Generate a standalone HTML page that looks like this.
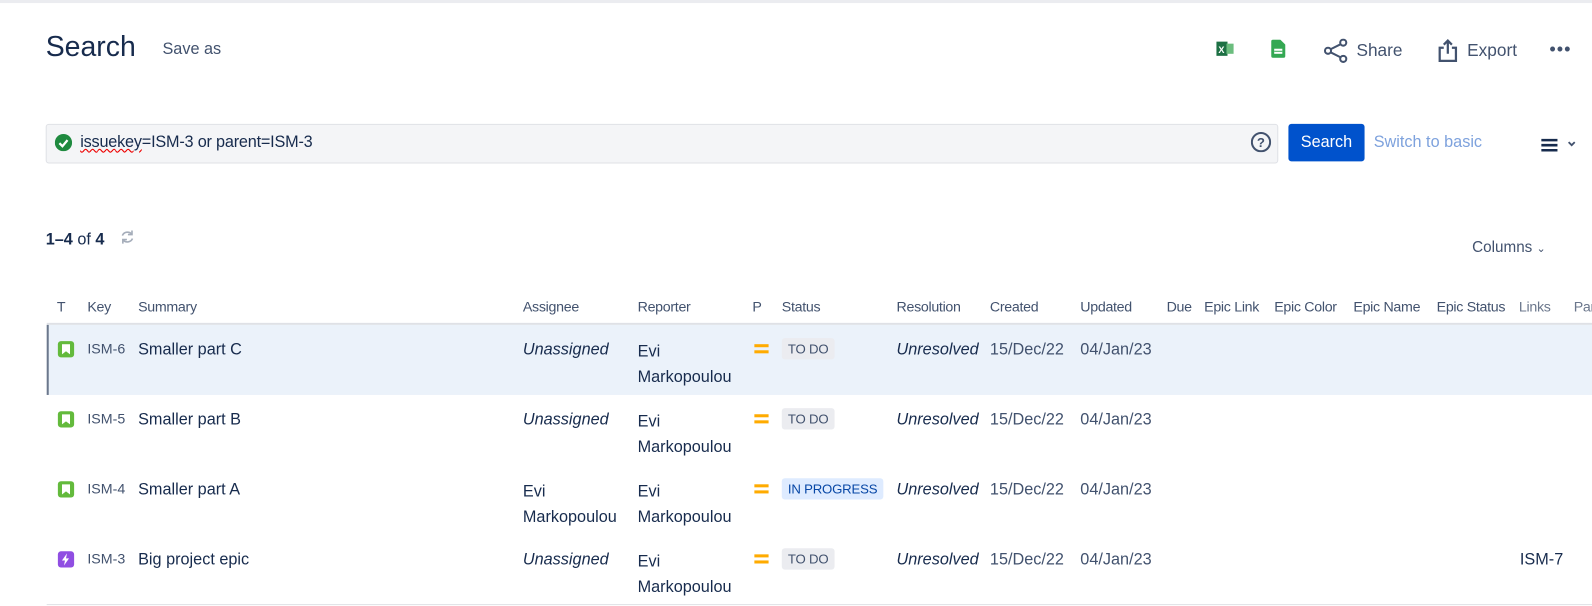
<!DOCTYPE html>
<html><head><meta charset="utf-8"><style>
*{margin:0;padding:0;box-sizing:border-box}
body{width:1592px;height:606px;overflow:hidden;background:#fff;font-family:"Liberation Sans",sans-serif;color:#172b4d;position:relative}
#w{position:absolute;left:0;top:0;width:1568px;height:597px;transform:scale(1.0153);transform-origin:0 0}
.a{position:absolute;white-space:nowrap}
.h{font-size:14px;color:#42526e;top:294px;letter-spacing:-0.3px}
.c{font-size:15px;color:#172b4d}
.s{margin-top:2px}
.g{color:#42526e}
.k{font-size:14px;color:#42526e}
.i{font-style:italic}
.pill{position:absolute;font-size:13px;background:#ebecf0;color:#42526e;padding:3px 6px;border-radius:3px;letter-spacing:-0.2px}
.ip{background:#deebff;color:#0747a6}
.eq{position:absolute;width:14px;height:9px;border-top:3px solid #ffab00;border-bottom:3px solid #ffab00}
.ico{position:absolute;width:16px;height:16px;border-radius:3px;background:#63ba3c}
</style></head><body><div id="w">
<div class="a" style="left:0;top:0;width:1568px;height:3px;background:#ebecf0"></div>
<div class="a" style="left:45px;top:30px;font-size:28px;color:#172b4d">Search</div>
<div class="a" style="left:160px;top:40px;font-size:16px;color:#42526e">Save as</div>
<svg class="a" style="left:1198px;top:40px" width="18" height="16"><rect x="0" y="1" width="11" height="14" fill="#1d7044"/><rect x="10" y="3" width="7" height="10" fill="#6bbd7e"/><text x="2" y="12" font-size="9" fill="#fff" font-family="Liberation Sans" font-weight="bold">X</text></svg>
<svg class="a" style="left:1252px;top:39px" width="14" height="18"><path d="M0 2q0-2 2-2h7l5 5v11q0 2-2 2H2q-2 0-2-2z" fill="#34a853"/><rect x="3" y="9" width="8" height="5" fill="#fff"/><rect x="3" y="11" width="8" height="1" fill="#34a853"/></svg>
<svg class="a" style="left:1304px;top:38px" width="24" height="24" fill="none" stroke="#42526e" stroke-width="2"><circle cx="19" cy="4" r="3"/><circle cx="4" cy="12" r="3"/><circle cx="19" cy="20" r="3"/><path d="M6.5 10.5l10-5M6.5 13.5l10 5"/></svg>
<div class="a" style="left:1336px;top:40px;font-size:17px;color:#42526e">Share</div>
<svg class="a" style="left:1416px;top:38px" width="20" height="24" fill="none" stroke="#42526e" stroke-width="2.2"><path d="M6 9H2v13h16V9h-4M10 15V2M6 6l4-4 4 4"/></svg>
<div class="a" style="left:1445px;top:40px;font-size:17px;color:#42526e">Export</div>
<div class="a" style="left:1526px;top:38px;font-size:18px;color:#42526e;letter-spacing:1px">•••</div>
<div class="a" style="left:45px;top:122px;width:1214px;height:39px;background:#f4f5f7;border:1px solid #dfe1e6;border-radius:3px"></div>
<svg class="a" style="left:54px;top:132px" width="17" height="17"><circle cx="8.5" cy="8.5" r="8.5" fill="#1f8a3f"/><path d="M4.5 9l3 3 5-6" stroke="#fff" stroke-width="2.2" fill="none"/></svg>
<div class="a" style="left:79px;top:132px;font-size:16px;color:#172b4d;letter-spacing:-0.2px"><span style="text-decoration:underline wavy #e00;text-decoration-thickness:1px">issuekey</span>=ISM-3 or parent=ISM-3</div>
<svg class="a" style="left:1232px;top:130px" width="20" height="20" fill="none" stroke="#42526e" stroke-width="2"><circle cx="10" cy="10" r="9"/><text x="6" y="15" font-size="13" font-weight="bold" fill="#42526e" stroke="none" font-family="Liberation Sans">?</text></svg>
<div class="a" style="left:1269px;top:122px;width:75px;height:37px;background:#0052cc;border-radius:3px;color:#fff;font-size:16px;text-align:center;line-height:37px">Search</div>
<div class="a" style="left:1353px;top:132px;font-size:16px;color:#7ea2dd">Switch to basic</div>
<svg class="a" style="left:1518px;top:136px" width="38" height="14"><path d="M0 2h16M0 7h16M0 12h16" stroke="#172b4d" stroke-width="2.5"/><path d="M27 4l3 3 3-3" stroke="#42526e" stroke-width="1.8" fill="none"/></svg>
<div class="a" style="left:45px;top:228px;font-size:16px"><b>1–4</b> of <b>4</b></div>
<svg class="a" style="left:118px;top:226px" width="15" height="15" fill="none" stroke="#a5adba" stroke-width="1.6"><path d="M12 5A5.5 5.5 0 0 0 2.5 6M3 10a5.5 5.5 0 0 0 9.5-1"/><path d="M12 1v4H8M3 14v-4h4"/></svg>
<div class="a" style="left:1450px;top:235px;font-size:15px;color:#42526e">Columns <span style="font-size:11px">⌄</span></div>
<div class="a h" style="left:56px">T</div>
<div class="a h" style="left:86px">Key</div>
<div class="a h" style="left:136px">Summary</div>
<div class="a h" style="left:515px">Assignee</div>
<div class="a h" style="left:628px">Reporter</div>
<div class="a h" style="left:741px">P</div>
<div class="a h" style="left:770px">Status</div>
<div class="a h" style="left:883px">Resolution</div>
<div class="a h" style="left:975px">Created</div>
<div class="a h" style="left:1064px">Updated</div>
<div class="a h" style="left:1149px">Due</div>
<div class="a h" style="left:1186px">Epic Link</div>
<div class="a h" style="left:1255px">Epic Color</div>
<div class="a h" style="left:1333px">Epic Name</div>
<div class="a h" style="left:1415px">Epic Status</div>
<div class="a h" style="left:1496px;color:#6b778c">Links</div>
<div class="a h" style="left:1550px;color:#6b778c">Par</div>
<div class="a" style="left:46px;top:318px;width:1522px;height:2px;background:#dfe1e6"></div>
<div class="a" style="left:46px;top:320px;width:1522px;height:69px;background:#ebf2fa;border-left:2px solid #6b778c"></div>
<div class="a" style="left:46px;top:595px;width:1522px;height:1px;background:#dfe1e6"></div>

<div class="ico" style="left:57px;top:336px"></div><svg class="a" style="left:61px;top:339px" width="8" height="10"><path d="M0 0h8v10L4 7 0 10z" fill="#fff"/></svg>
<div class="a k" style="left:86px;top:335px">ISM-6</div>
<div class="a c s" style="left:136px;top:334px;font-size:16px">Smaller part C</div>
<div class="a c i s" style="left:515px;top:334px;font-size:16px">Unassigned</div>
<div class="a c" style="left:628px;top:334px;font-size:16px;line-height:25px">Evi<br>Markopoulou</div>
<div class="eq" style="left:743px;top:339px"></div>
<div class="pill" style="left:770px;top:333px">TO DO</div>
<div class="a c i s" style="left:883px;top:334px;font-size:16px">Unresolved</div>
<div class="a c g s" style="left:975px;top:334px;font-size:16px">15/Dec/22</div>
<div class="a c g s" style="left:1064px;top:334px;font-size:16px">04/Jan/23</div>

<div class="ico" style="left:57px;top:405px"></div><svg class="a" style="left:61px;top:408px" width="8" height="10"><path d="M0 0h8v10L4 7 0 10z" fill="#fff"/></svg>
<div class="a k" style="left:86px;top:404px">ISM-5</div>
<div class="a c s" style="left:136px;top:403px;font-size:16px">Smaller part B</div>
<div class="a c i s" style="left:515px;top:403px;font-size:16px">Unassigned</div>
<div class="a c" style="left:628px;top:403px;font-size:16px;line-height:25px">Evi<br>Markopoulou</div>
<div class="eq" style="left:743px;top:408px"></div>
<div class="pill" style="left:770px;top:402px">TO DO</div>
<div class="a c i s" style="left:883px;top:403px;font-size:16px">Unresolved</div>
<div class="a c g s" style="left:975px;top:403px;font-size:16px">15/Dec/22</div>
<div class="a c g s" style="left:1064px;top:403px;font-size:16px">04/Jan/23</div>

<div class="ico" style="left:57px;top:474px"></div><svg class="a" style="left:61px;top:477px" width="8" height="10"><path d="M0 0h8v10L4 7 0 10z" fill="#fff"/></svg>
<div class="a k" style="left:86px;top:473px">ISM-4</div>
<div class="a c s" style="left:136px;top:472px;font-size:16px">Smaller part A</div>
<div class="a c" style="left:515px;top:472px;font-size:16px;line-height:25px">Evi<br>Markopoulou</div>
<div class="a c" style="left:628px;top:472px;font-size:16px;line-height:25px">Evi<br>Markopoulou</div>
<div class="eq" style="left:743px;top:477px"></div>
<div class="pill ip" style="left:770px;top:471px">IN PROGRESS</div>
<div class="a c i s" style="left:883px;top:472px;font-size:16px">Unresolved</div>
<div class="a c g s" style="left:975px;top:472px;font-size:16px">15/Dec/22</div>
<div class="a c g s" style="left:1064px;top:472px;font-size:16px">04/Jan/23</div>

<div class="ico" style="left:57px;top:543px;background:#904ee2"></div><svg class="a" style="left:60px;top:545px" width="10" height="12"><path d="M6 0L1 7h3l-1 5 5-7H5z" fill="#fff"/></svg>
<div class="a k" style="left:86px;top:542px">ISM-3</div>
<div class="a c s" style="left:136px;top:541px;font-size:16px">Big project epic</div>
<div class="a c i s" style="left:515px;top:541px;font-size:16px">Unassigned</div>
<div class="a c" style="left:628px;top:541px;font-size:16px;line-height:25px">Evi<br>Markopoulou</div>
<div class="eq" style="left:743px;top:546px"></div>
<div class="pill" style="left:770px;top:540px">TO DO</div>
<div class="a c i s" style="left:883px;top:541px;font-size:16px">Unresolved</div>
<div class="a c g s" style="left:975px;top:541px;font-size:16px">15/Dec/22</div>
<div class="a c g s" style="left:1064px;top:541px;font-size:16px">04/Jan/23</div>
<div class="a c s" style="left:1497px;top:541px;font-size:16px">ISM-7</div>
</div></body></html>
